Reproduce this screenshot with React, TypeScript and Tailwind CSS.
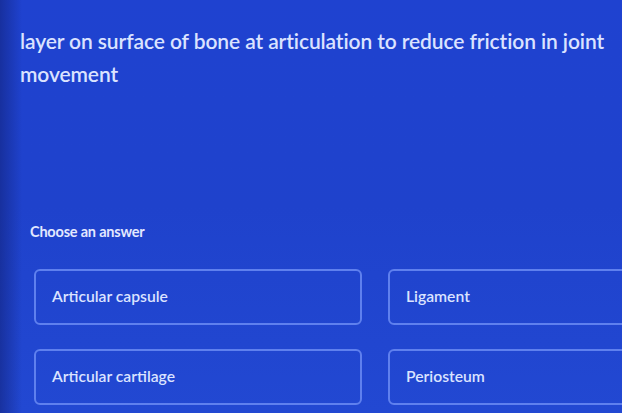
// Quiz question card — multiple choice view
export default function App() {
  const answers = ["Articular capsule", "Ligament", "Articular cartilage", "Periosteum"];

  return (
    <div
      className="relative h-[413px] w-[622px] overflow-hidden bg-gradient-to-b from-[#1f42d0] via-[#1f42cc] to-[#2248d2] text-[#dfe6ff]"
      style={{ fontFamily: "Lato, 'Open Sans', sans-serif" }}
    >
      <div className="pointer-events-none absolute inset-y-0 left-0 w-[22px] bg-gradient-to-r from-[#14288a]/70 to-transparent" />

      <div className="pl-[20px] pr-[4px] pt-[24px]">
        <p className="text-[21px] font-semibold leading-[33px] tracking-[-0.1px] text-[#dbe3ff]">
          layer on surface of bone at articulation to reduce friction in joint movement
        </p>
      </div>

      <div className="pl-[30px] pt-[132px]">
        <p className="text-[14.5px] font-bold leading-[20px] tracking-[-0.2px] text-[#e2e8ff]">Choose an answer</p>
      </div>

      <div className="grid w-[760px] grid-cols-[328px_328px] gap-x-[26px] gap-y-[24px] pl-[34px] pt-[27px]">
        {answers.map((a) => (
          <div
            key={a}
            className="flex h-[56px] items-center rounded-[6px] border-2 border-[#5f80ee] px-[16px] text-[15.7px] font-semibold text-[#dbe3ff]"
          >
            {a}
          </div>
        ))}
      </div>
    </div>
  );
}
